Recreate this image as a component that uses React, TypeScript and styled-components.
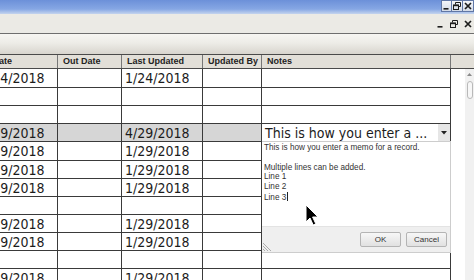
import styled, { createGlobalStyle } from 'styled-components'

const GlobalStyle = createGlobalStyle`
  html, body { margin: 0; padding: 0; background: #fff; }
  body { font-family: "Liberation Sans", Arial, sans-serif; }
`

const Screen = styled.div`
  position: relative;
  width: 474px;
  height: 280px;
  overflow: hidden;
  display: flex;
  flex-direction: column;
  background: #fff;
`

// window chrome
const TitleBar = styled.div`
  flex: none;
  height: 14px;
  display: flex;
  justify-content: flex-end;
  align-items: flex-start;
  background: linear-gradient(#6c90d9, #86a7e4 65%, #c4d4ee);
`

const CapButton = styled.div`
  width: 11px;
  height: 12px;
  box-sizing: border-box;
  border: 1px solid #6077a6;
  background: linear-gradient(#f4f6fa, #d3dae6);
  display: flex;
  align-items: center;
  justify-content: center;
  & + & { border-left: none; }
`

const MenuBar = styled.div`
  flex: none;
  height: 19px;
  display: flex;
  justify-content: flex-end;
  align-items: center;
  gap: 6px;
  padding-right: 2px;
  background: #ebeae5;
`

const Toolbar = styled.div`
  flex: none;
  height: 20px;
  border-top: 1px solid #6e6e6e;
  background: linear-gradient(#f7f6f2, #edece7 45%, #d8d5ce);
`

// grid
const Viewport = styled.div`
  flex: 1;
  overflow: hidden;
`

const Grid = styled.div`
  margin-left: -23px;
  width: 497px;
  display: flex;
  flex-direction: column;
`

const HeaderRow = styled.div`
  display: flex;
  height: 15px;
  box-sizing: border-box;
  border-top: 1px solid #4a4a4a;
  border-bottom: 1px solid #4a4a4a;
  background: #e2dfd8;
`

const HeadCell = styled.div<{ $w?: number }>`
  ${p => (p.$w ? `width: ${p.$w}px;` : 'flex: 1;')}
  flex-shrink: 0;
  box-sizing: border-box;
  border-right: 1px solid #777;
  padding-left: 5px;
  font: bold 9px/13px "Liberation Sans", Arial, sans-serif;
  color: #222;
  white-space: nowrap;
  overflow: hidden;
  &:last-child { border-right: none; }
`

const Body = styled.div`
  display: flex;
`

const Rows = styled.div`
  width: 474px;
  flex: none;
  display: flex;
  flex-direction: column;
`

const Row = styled.div<{ $tall?: boolean }>`
  display: flex;
  height: ${p => (p.$tall ? 19 : 18)}px;
`

const Cell = styled.div<{ $w: number; $sel?: boolean }>`
  position: relative;
  width: ${p => p.$w}px;
  flex: none;
  box-sizing: border-box;
  border-right: 1px solid #3a3a3a;
  border-bottom: 1px solid #3a3a3a;
  padding: 1px 0 0 3px;
  background: ${p => (p.$sel ? '#d6d6d6' : '#fff')};
  font: 14px/16px "DejaVu Sans Condensed", "DejaVu Sans", sans-serif;
  color: #1c1c1c;
  white-space: nowrap;
  overflow: ${p => (p.$sel ? 'visible' : 'hidden')};
`

const NotesField = styled.div`
  position: absolute;
  inset: 0;
  display: flex;
  background: #fff;
`

const NotesText = styled.div`
  flex: 1;
  padding: 1px 0 0 3px;
  overflow: hidden;
`

const DropButton = styled.div`
  width: 12px;
  flex: none;
  background: #e6e6e6;
  display: flex;
  align-items: center;
  justify-content: center;
`

// memo popup
const MemoPopup = styled.div`
  position: absolute;
  left: 0;
  top: 100%;
  z-index: 2;
  width: 189px;
  height: 112px;
  box-sizing: border-box;
  border: 1px solid #cdcdcd;
  border-left: none;
  background: #fff;
  display: flex;
  flex-direction: column;
`

const MemoText = styled.div`
  flex: 1;
  padding: 1px 2px;
  font: 8.2px/9.8px "Liberation Sans", Arial, sans-serif;
  color: #333;
  white-space: pre;
`

const Caret = styled.span`
  display: inline-block;
  width: 1px;
  height: 9px;
  margin-left: 1px;
  vertical-align: -1px;
  background: #222;
`

const MemoFooter = styled.div`
  flex: none;
  height: 25px;
  border-top: 1px solid #e3e3e3;
  background: #efefef;
  display: flex;
  align-items: center;
  gap: 5px;
  padding: 0 3px 0 1px;
`

const Grip = styled.svg`
  align-self: flex-end;
  margin-right: auto;
  margin-bottom: 1px;
`

const DlgButton = styled.div`
  width: 41px;
  height: 15px;
  box-sizing: border-box;
  border: 1px solid #b4b4b4;
  border-radius: 2px;
  background: linear-gradient(#f7f7f7, #e1e1e1);
  font: 8px/13px "Liberation Sans", Arial, sans-serif;
  color: #333;
  text-align: center;
`

// right side
const Side = styled.div`
  flex: 1;
  display: flex;
  justify-content: flex-end;
  background: #fff;
`

const Track = styled.div`
  width: 9px;
  height: 215px;
  background: #f1f1f1;
  display: flex;
  flex-direction: column;
  align-items: center;
  padding-top: 4px;
  box-sizing: border-box;
`

const Thumb = styled.div`
  width: 6px;
  height: 18px;
  margin-top: 5px;
  box-sizing: border-box;
  border: 1px solid #b9b9b9;
  border-radius: 3px;
  background: #f7f7f7;
`

const Pointer = styled.svg`
  position: absolute;
  left: 305px;
  top: 204px;
  z-index: 5;
`

const COLS = [81, 64, 81, 59, 189]

type Rec = { inDate?: string; updated?: string; tall?: boolean; sel?: boolean }

const rows: Rec[] = [
  { inDate: '1/24/2018', updated: '1/24/2018', tall: true },
  {},
  {},
  { inDate: '1/29/2018', updated: '4/29/2018', sel: true },
  { inDate: '1/29/2018', updated: '1/29/2018', tall: true },
  { inDate: '1/29/2018', updated: '1/29/2018' },
  { inDate: '1/29/2018', updated: '1/29/2018' },
  {},
  { inDate: '1/29/2018', updated: '1/29/2018' },
  { inDate: '1/29/2018', updated: '1/29/2018' },
  {},
  { inDate: '1/29/2018', updated: '1/29/2018' },
]

const MinGlyph = () => (
  <svg width="7" height="8" viewBox="0 0 7 8"><rect x="0.5" y="6" width="5" height="1.6" fill="#1d1d1d" /></svg>
)
const RestoreGlyph = () => (
  <svg width="8" height="8" viewBox="0 0 8 8" fill="none" stroke="#1d1d1d" strokeWidth="1">
    <path d="M2.5 2.5V0.5h5v4h-2" />
    <rect x="0.5" y="3" width="5" height="4.5" />
    <path d="M0.5 3.5h5" strokeWidth="1.4" />
  </svg>
)
const CloseGlyph = () => (
  <svg width="8" height="8" viewBox="0 0 8 8" stroke="#1d1d1d" strokeWidth="1.7">
    <path d="M1 1l6 6M7 1l-6 6" />
  </svg>
)

function WindowCaps() {
  return (
    <>
      <CapButton><MinGlyph /></CapButton>
      <CapButton><RestoreGlyph /></CapButton>
      <CapButton><CloseGlyph /></CapButton>
    </>
  )
}

function MemoEditor() {
  return (
    <MemoPopup>
      <MemoText>
        {'This is how you enter a memo for a record.\n\nMultiple lines can be added.\nLine 1\nLine 2\nLine 3'}
        <Caret />
      </MemoText>
      <MemoFooter>
        <Grip width="9" height="9" viewBox="0 0 9 9" stroke="#9a9a9a" strokeWidth="0.8">
          <path d="M0 1l8 8M0 4l5 5M0 7l2 2" />
        </Grip>
        <DlgButton>OK</DlgButton>
        <DlgButton>Cancel</DlgButton>
      </MemoFooter>
    </MemoPopup>
  )
}

export default function App() {
  return (
    <Screen>
      <GlobalStyle />
      <TitleBar>
        <WindowCaps />
      </TitleBar>
      <MenuBar>
        <MinGlyph />
        <RestoreGlyph />
        <CloseGlyph />
      </MenuBar>
      <Toolbar />
      <Viewport>
        <Grid>
          <HeaderRow>
            <HeadCell $w={COLS[0]}>In Date</HeadCell>
            <HeadCell $w={COLS[1]}>Out Date</HeadCell>
            <HeadCell $w={COLS[2]}>Last Updated</HeadCell>
            <HeadCell $w={COLS[3]}>Updated By</HeadCell>
            <HeadCell $w={COLS[4]}>Notes</HeadCell>
            <HeadCell />
          </HeaderRow>
          <Body>
            <Rows>
              {rows.map((r, i) => (
                <Row key={i} $tall={r.tall}>
                  <Cell $w={COLS[0]} $sel={r.sel}>{r.inDate}</Cell>
                  <Cell $w={COLS[1]} $sel={r.sel} />
                  <Cell $w={COLS[2]} $sel={r.sel}>{r.updated}</Cell>
                  <Cell $w={COLS[3]} $sel={r.sel} />
                  <Cell $w={COLS[4]} $sel={r.sel}>
                    {r.sel && (
                      <>
                        <NotesField>
                          <NotesText>This is how you enter a ...</NotesText>
                          <DropButton>
                            <svg width="6" height="4" viewBox="0 0 6 4"><path d="M0 0h6L3 3.5z" fill="#222" /></svg>
                          </DropButton>
                        </NotesField>
                        <MemoEditor />
                      </>
                    )}
                  </Cell>
                </Row>
              ))}
            </Rows>
            <Side>
              <Track>
                <svg width="5" height="3" viewBox="0 0 5 3"><path d="M0 3h5L2.5 0z" fill="#8a8a8a" /></svg>
                <Thumb />
              </Track>
            </Side>
          </Body>
        </Grid>
      </Viewport>
      <Pointer width="14" height="22" viewBox="0 0 14 22">
        <path d="M1 1v17l4-4 3.2 7 2.6-1.2-3.2-6.8H13z" fill="#000" stroke="#fff" strokeWidth="1" />
      </Pointer>
    </Screen>
  )
}
